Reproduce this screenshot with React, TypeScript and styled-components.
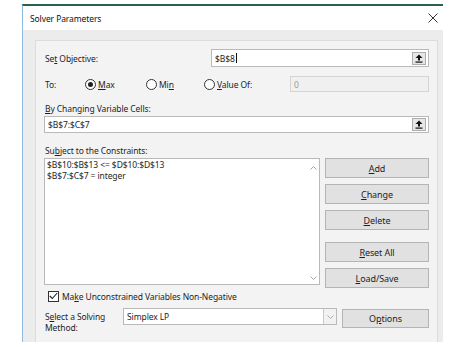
import React from "react";
import styled, { createGlobalStyle } from "styled-components";

const Global = createGlobalStyle`
  html, body {
    margin: 0;
    padding: 0;
    background: #ffffff;
  }
  body {
    font-family: "Noto Sans", "Open Sans", sans-serif;
    font-size: 8.5px;
    letter-spacing: -0.1px;
    color: #1e1e1e;
  }
`;

const Window = styled.div`
  margin: 4px 0 0 22px;
  width: 421px;
  height: 338px;
  border-top: 2px solid #2a634c;
  border-left: 1px solid #8dbbe2;
  box-sizing: border-box;
  display: flex;
  flex-direction: column;
  background: #ffffff;
`;

const TitleBar = styled.div`
  height: 24px;
  display: flex;
  align-items: center;
  justify-content: space-between;
  padding: 0 5px 0 7px;
  font-size: 8.5px;
  color: #111;
`;

const Body = styled.div`
  flex: 1;
  background: #ececec;
  padding: 10px 10px 0 12px;
  display: flex;
`;

const Group = styled.div`
  flex: 1;
  background: #f3f3f3;
  border: 1px solid #dcdcdc;
  border-bottom: none;
  padding: 8px 8px 0 8px;
  display: flex;
  flex-direction: column;
`;

const Row = styled.div<{ $h: number; $mt?: number; $top?: boolean }>`
  display: flex;
  align-items: ${(p) => (p.$top ? "flex-start" : "center")};
  height: ${(p) => p.$h}px;
  margin-top: ${(p) => p.$mt ?? 0}px;
`;

const Label = styled.div<{ $w?: number; $mt?: number }>`
  width: ${(p) => (p.$w ? `${p.$w}px` : "auto")};
  margin-top: ${(p) => p.$mt ?? 0}px;
  flex: none;
  padding-left: 1px;
  white-space: nowrap;
  line-height: 11px;
`;

const U = styled.span`
  text-decoration: underline;
`;

const TextBox = styled.div<{ $disabled?: boolean }>`
  flex: 1;
  height: 100%;
  box-sizing: border-box;
  border: 1px solid ${(p) => (p.$disabled ? "#d4d4d4" : "#b9b9b9")};
  background: ${(p) => (p.$disabled ? "#f0f0f0" : "#ffffff")};
  color: ${(p) => (p.$disabled ? "#9a9a9a" : "#1e1e1e")};
  display: flex;
  align-items: center;
  padding: 0 2px 0 3px;
`;

const Caret = styled.span`
  display: inline-block;
  width: 1px;
  height: 10px;
  background: #111;
  margin-left: 1px;
`;

const Grow = styled.span`
  flex: 1;
`;

const RefButton = styled.div`
  width: 14px;
  height: 13px;
  box-sizing: border-box;
  border: 1px solid #adadad;
  background: #e6e6e6;
  display: flex;
  align-items: center;
  justify-content: center;
`;

const Radio = styled.label<{ $w: number }>`
  width: ${(p) => p.$w}px;
  flex: none;
  display: flex;
  align-items: center;
  gap: 2px;
`;

const Circle = styled.span<{ $on?: boolean }>`
  width: 11px;
  height: 11px;
  box-sizing: border-box;
  border: 1px solid #333;
  border-radius: 50%;
  background: #fff;
  display: flex;
  align-items: center;
  justify-content: center;
  &::after {
    content: "";
    width: 5px;
    height: 5px;
    border-radius: 50%;
    background: ${(p) => (p.$on ? "#222" : "transparent")};
  }
`;

const Constraints = styled.div`
  margin-top: 1px;
  display: grid;
  grid-template-columns: 276px 104px;
  column-gap: 5px;
  height: 130px;
`;

const ListBox = styled.div`
  height: 127px;
  box-sizing: border-box;
  border: 1px solid #b9b9b9;
  background: #ffffff;
  display: flex;
  padding: 1px 0 0 2px;
`;

const ListLines = styled.div`
  flex: 1;
  line-height: 10.5px;
`;

const ScrollTrack = styled.div`
  width: 12px;
  display: flex;
  flex-direction: column;
  justify-content: space-between;
  align-items: center;
  padding: 6px 0 4px;
`;

const ButtonColumn = styled.div`
  display: flex;
  flex-direction: column;
`;

const Button = styled.div<{ $mt?: number; $w?: number; $h?: number }>`
  height: ${(p) => p.$h ?? 20}px;
  width: ${(p) => (p.$w ? `${p.$w}px` : "auto")};
  flex: none;
  margin-top: ${(p) => p.$mt ?? 0}px;
  box-sizing: border-box;
  border: 1px solid #b4b4b4;
  background: #e1e1e1;
  display: flex;
  align-items: center;
  justify-content: center;
  font-size: 9px;
`;

const CheckRow = styled.div`
  display: flex;
  align-items: center;
  gap: 3px;
  margin: 2px 0 0 4px;
  height: 12px;
`;

const Box = styled.span`
  width: 11px;
  height: 11px;
  box-sizing: border-box;
  border: 1px solid #333;
  background: #fff;
  display: flex;
  align-items: center;
  justify-content: center;
`;

const Select = styled.div`
  width: 214px;
  height: 17px;
  flex: none;
  box-sizing: border-box;
  border: 1px solid #b9b9b9;
  background: #fff;
  display: flex;
  align-items: center;
  padding-left: 3px;
`;

const DropArrow = styled.div`
  width: 12px;
  height: 100%;
  border-left: 1px solid #c8c8c8;
  background: #f2f2f2;
  display: flex;
  align-items: center;
  justify-content: center;
`;

const UpArrow = () => (
  <svg width="8" height="9" viewBox="0 0 8 9">
    <path d="M4 0.5 L7.5 4 H5 V6.5 H3 V4 H0.5 Z" fill="#111" />
    <rect x="0.5" y="7.5" width="7" height="1.2" fill="#111" />
  </svg>
);

const Chevron = ({ up }: { up?: boolean }) => (
  <svg width="7" height="4" viewBox="0 0 7 4">
    <path
      d={up ? "M0.5 3.5 L3.5 0.5 L6.5 3.5" : "M0.5 0.5 L3.5 3.5 L6.5 0.5"}
      stroke="#a8a8a8"
      fill="none"
      strokeWidth="1"
    />
  </svg>
);

export default function App() {
  return (
    <>
      <Global />
      <Window>
        <TitleBar>
          <span>Solver Parameters</span>
          <svg width="10" height="10" viewBox="0 0 10 10">
            <path d="M0.5 0.5 L9.5 9.5 M9.5 0.5 L0.5 9.5" stroke="#333" strokeWidth="1" />
          </svg>
        </TitleBar>
        <Body>
          <Group>
            <Row $h={18}>
              <Label $w={166}>
                Se<U>t</U> Objective:
              </Label>
              <TextBox>
                $B$8
                <Caret />
                <Grow />
                <RefButton>
                  <UpArrow />
                </RefButton>
              </TextBox>
            </Row>
            <Row $h={16} $mt={9}>
              <Label $w={40}>To:</Label>
              <Radio $w={61}>
                <Circle $on />
                <span>
                  <U>M</U>ax
                </span>
              </Radio>
              <Radio $w={58}>
                <Circle />
                <span>
                  Mi<U>n</U>
                </span>
              </Radio>
              <Radio $w={86}>
                <Circle />
                <span>
                  <U>V</U>alue Of:
                </span>
              </Radio>
              <TextBox $disabled>0</TextBox>
            </Row>
            <Row $h={14} $mt={9}>
              <Label>
                <U>B</U>y Changing Variable Cells:
              </Label>
            </Row>
            <Row $h={17} $mt={1}>
              <TextBox>
                $B$7:$C$7
                <Grow />
                <RefButton>
                  <UpArrow />
                </RefButton>
              </TextBox>
            </Row>
            <Row $h={14} $mt={10}>
              <Label>
                Su<U>b</U>ject to the Constraints:
              </Label>
            </Row>
            <Constraints>
              <ListBox>
                <ListLines>
                  <div>$B$10:$B$13 &lt;= $D$10:$D$13</div>
                  <div>$B$7:$C$7 = integer</div>
                </ListLines>
                <ScrollTrack>
                  <Chevron up />
                  <Chevron />
                </ScrollTrack>
              </ListBox>
              <ButtonColumn>
                <Button>
                  <U>A</U>dd
                </Button>
                <Button $mt={6}>
                  <U>C</U>hange
                </Button>
                <Button $mt={6}>
                  <U>D</U>elete
                </Button>
                <Button $mt={12}>
                  <U>R</U>eset All
                </Button>
                <Button $mt={6}>
                  <U>L</U>oad/Save
                </Button>
              </ButtonColumn>
            </Constraints>
            <CheckRow>
              <Box>
                <svg width="9" height="8" viewBox="0 0 9 8">
                  <path d="M0.8 4 L3.3 6.5 L8.2 1" stroke="#222" strokeWidth="1.1" fill="none" />
                </svg>
              </Box>
              <span>
                Ma<U>k</U>e Unconstrained Variables Non-Negative
              </span>
            </CheckRow>
            <Row $h={20} $mt={6} $top>
              <Label $w={78} $mt={3}>
                <div>
                  S<U>e</U>lect a Solving
                </div>
                <div>Method:</div>
              </Label>
              <Select>
                Simplex LP
                <Grow />
                <DropArrow>
                  <Chevron />
                </DropArrow>
              </Select>
              <Button $w={87} $h={19} style={{ marginLeft: 5, marginTop: 1 }}>
                O<U>p</U>tions
              </Button>
            </Row>
          </Group>
        </Body>
      </Window>
    </>
  );
}
